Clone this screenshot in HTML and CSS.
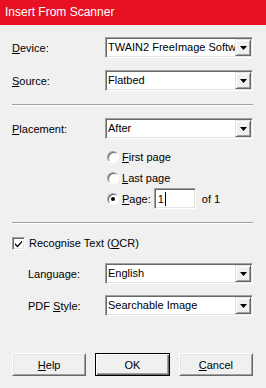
FILE: index.html
```html
<!DOCTYPE html>
<html lang="en">
<head>
    <meta charset="UTF-8">
    <title>Insert From Scanner</title>
    <link rel="stylesheet" href="styles.css">
</head>
<body>
    <div class="dialog">
        <header class="title-bar">Insert From Scanner</header>

        <main class="content">
            <div class="row">
                <label class="field-label"><u>D</u>evice:</label>
                <div class="combo">
                    <span class="combo-text">TWAIN2 FreeImage Softw</span>
                    <span class="combo-btn"><svg width="7" height="4" viewBox="0 0 7 4"><polygon points="0,0 7,0 3.5,4" fill="#000"/></svg></span>
                </div>
            </div>
            <div class="row">
                <label class="field-label"><u>S</u>ource:</label>
                <div class="combo">
                    <span class="combo-text">Flatbed</span>
                    <span class="combo-btn"><svg width="7" height="4" viewBox="0 0 7 4"><polygon points="0,0 7,0 3.5,4" fill="#000"/></svg></span>
                </div>
            </div>

            <div class="separator"></div>

            <div class="row">
                <label class="field-label"><u>P</u>lacement:</label>
                <div class="combo">
                    <span class="combo-text">After</span>
                    <span class="combo-btn"><svg width="7" height="4" viewBox="0 0 7 4"><polygon points="0,0 7,0 3.5,4" fill="#000"/></svg></span>
                </div>
            </div>
            <div class="radio-group">
                <div class="radio-row">
                    <span class="radio"></span>
                    <span><u>F</u>irst page</span>
                </div>
                <div class="radio-row">
                    <span class="radio"></span>
                    <span><u>L</u>ast page</span>
                </div>
                <div class="radio-row">
                    <span class="radio checked"></span>
                    <span><u>P</u>age:</span>
                    <div class="page-input"><span>1</span><span class="caret"></span></div>
                    <span class="page-of">of 1</span>
                </div>
            </div>

            <div class="separator"></div>

            <div class="check-row">
                <span class="checkbox"><svg width="9" height="9" viewBox="0 0 9 9"><path d="M1 4 L3.5 6.5 L8 1.5 L8 3.5 L3.5 8.5 L1 6 Z" fill="#000"/></svg></span>
                <span>Recognise Text (<u>O</u>CR)</span>
            </div>
            <div class="row indent first-indent">
                <label class="field-label">Lan<u>g</u>uage:</label>
                <div class="combo">
                    <span class="combo-text">English</span>
                    <span class="combo-btn"><svg width="7" height="4" viewBox="0 0 7 4"><polygon points="0,0 7,0 3.5,4" fill="#000"/></svg></span>
                </div>
            </div>
            <div class="row indent">
                <label class="field-label">PDF <u>S</u>tyle:</label>
                <div class="combo">
                    <span class="combo-text">Searchable Image</span>
                    <span class="combo-btn"><svg width="7" height="4" viewBox="0 0 7 4"><polygon points="0,0 7,0 3.5,4" fill="#000"/></svg></span>
                </div>
            </div>

            <div class="button-row">
                <button class="btn"><u>H</u>elp</button>
                <button class="btn default">OK</button>
                <button class="btn"><u>C</u>ancel</button>
            </div>
        </main>
    </div>
</body>
</html>
```

FILE: styles.css
```css
* {
    margin: 0;
    padding: 0;
    box-sizing: border-box;
}

body {
    background: #f0f0f0;
    font-family: 'Liberation Sans', Arial, sans-serif;
    font-size: 11px;
    color: #000;
}

.dialog {
    width: 266px;
    height: 388px;
    display: flex;
    flex-direction: column;
}

.title-bar {
    height: 25px;
    line-height: 25px;
    background: #e81123;
    color: #fff;
    padding-left: 5px;
    font-size: 12px;
}

.content {
    flex: 1;
    display: flex;
    flex-direction: column;
    padding: 12px 13px 12px 12px;
}

.row {
    display: flex;
    align-items: center;
    height: 21px;
}

.row + .row {
    margin-top: 12px;
}

.field-label {
    width: 93px;
    flex-shrink: 0;
}

.indent .field-label {
    padding-left: 16px;
}

.indent.first-indent {
    margin-top: 11px;
}

.row.indent + .row.indent {
    margin-top: 11px;
}

.combo {
    flex: 1;
    min-width: 0;
    height: 21px;
    display: flex;
    background: #fff;
    border: 1px solid;
    border-color: #a0a0a0 #fff #fff #a0a0a0;
    box-shadow: inset 1px 1px #696969, inset -1px -1px #e3e3e3;
    padding: 1px;
}

.combo-text {
    flex: 1;
    min-width: 0;
    padding-left: 1px;
    line-height: 17px;
    white-space: nowrap;
    overflow: hidden;
}

.combo-btn {
    width: 16px;
    height: 17px;
    flex-shrink: 0;
    display: flex;
    align-items: center;
    justify-content: center;
    background: #f0f0f0;
    border: 1px solid;
    border-color: #e3e3e3 #696969 #696969 #e3e3e3;
    box-shadow: inset 1px 1px #fff, inset -1px -1px #a0a0a0;
}

.separator {
    height: 2px;
    border-top: 1px solid #a0a0a0;
    border-bottom: 1px solid #fff;
    margin-top: 13px;
    margin-bottom: 12px;
}

.radio-group {
    margin-top: 7px;
    padding-left: 95px;
}

.radio-row {
    display: flex;
    align-items: center;
    height: 21px;
}

.radio {
    width: 12px;
    height: 12px;
    border-radius: 50%;
    background: #fff;
    border: 1px solid;
    border-color: #a0a0a0 #fff #fff #a0a0a0;
    box-shadow: inset 1px 1px #696969;
    margin-right: 3px;
    display: flex;
    align-items: center;
    justify-content: center;
}

.radio.checked::after {
    content: '';
    width: 4px;
    height: 4px;
    border-radius: 50%;
    background: #000;
}

.page-input {
    width: 42px;
    height: 21px;
    margin-left: 3px;
    background: #fff;
    border: 1px solid;
    border-color: #a0a0a0 #fff #fff #a0a0a0;
    box-shadow: inset 1px 1px #696969, inset -1px -1px #e3e3e3;
    padding-left: 3px;
    display: flex;
    align-items: center;
}

.caret {
    width: 1px;
    height: 14px;
    background: #000;
    margin-left: 1px;
}

.page-of {
    margin-left: 6px;
}

.check-row {
    display: flex;
    align-items: center;
    height: 18px;
    margin-top: -2px;
}

.checkbox {
    width: 13px;
    height: 13px;
    background: #fff;
    border: 1px solid;
    border-color: #a0a0a0 #fff #fff #a0a0a0;
    box-shadow: inset 1px 1px #696969, inset -1px -1px #e3e3e3;
    margin-right: 4px;
    display: flex;
    align-items: center;
    justify-content: center;
}

.button-row {
    margin-top: auto;
    display: flex;
    gap: 9px;
}

.btn {
    width: 75px;
    height: 23px;
    font-family: inherit;
    font-size: 11px;
    color: #000;
    background: #f0f0f0;
    border: 1px solid;
    border-color: #fff #696969 #696969 #fff;
    box-shadow: inset 1px 1px #e3e3e3, inset -1px -1px #a0a0a0;
}

.btn.default {
    border-color: #000;
    box-shadow: inset 1px 1px #fff, inset -1px -1px #696969, inset -2px -2px #a0a0a0;
}
```
